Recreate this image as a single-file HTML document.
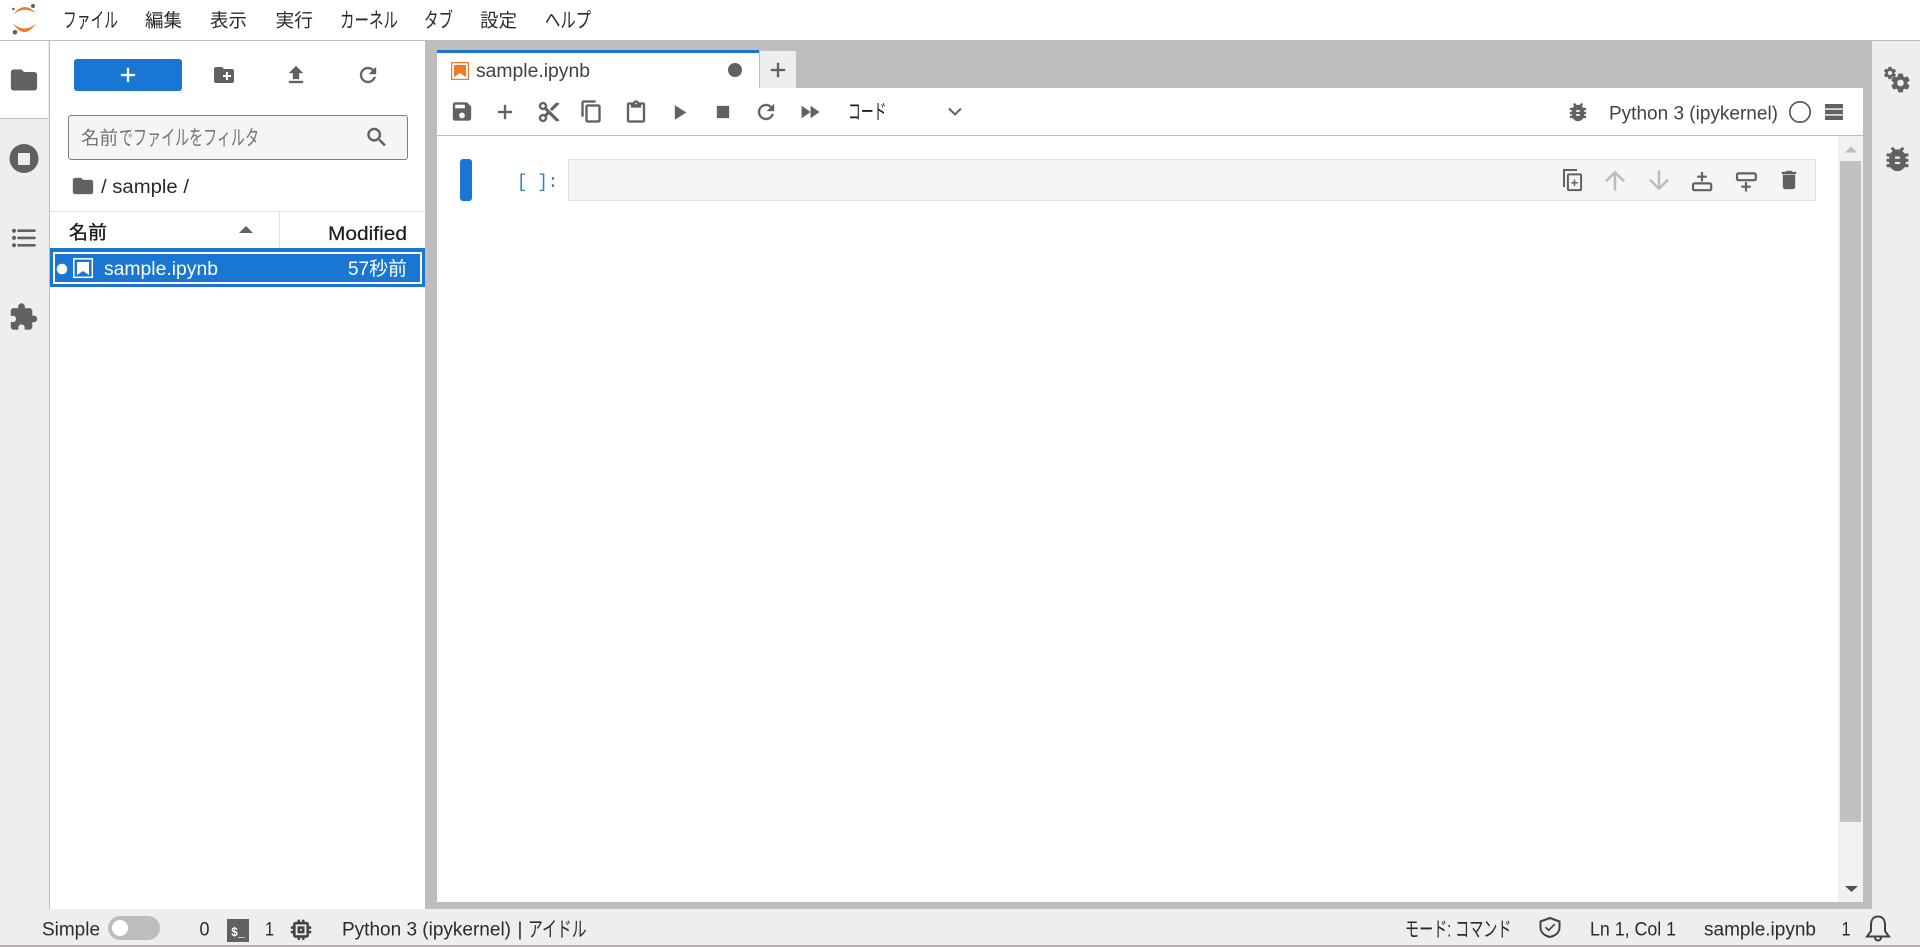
<!DOCTYPE html>
<html lang="ja"><head><meta charset="utf-8"><title>sample.ipynb - JupyterLab</title>
<style>
html,body{margin:0;padding:0;background:#fff;width:1920px;height:947px;overflow:hidden}
div{position:absolute;box-sizing:border-box}
svg{position:absolute;left:0;top:0}
text{font-family:"Liberation Sans","Noto Sans CJK JP",sans-serif;font-size:19px;fill:#2b2b2b;white-space:pre}
.ic{fill:#616161;stroke:#616161;stroke-width:.35}
.cj{font-size:18.5px}
.ka{font-size:21px}
</style></head><body>
<div style="left:0;top:0;width:1920px;height:40px;background:#fff"></div>
<div style="left:0;top:40px;width:1920px;height:1px;background:#bdbdbd"></div>
<div style="left:0;top:41px;width:50px;height:868px;background:#eee;border-right:1px solid #bdbdbd"></div>
<div style="left:0;top:41px;width:49px;height:78px;background:#fff;border-bottom:1px solid #bdbdbd;border-right:1px solid #eee"></div>
<div style="left:50px;top:41px;width:375px;height:868px;background:#fff"></div>
<div style="left:425px;top:41px;width:1447px;height:868px;background:#bdbdbd"></div>
<div style="left:1872px;top:41px;width:48px;height:868px;background:#eee"></div>
<div style="left:0;top:909px;width:1920px;height:36px;background:#eee"></div>
<div style="left:0;top:945px;width:1920px;height:2px;background:#b5afaf"></div>
<div style="left:74px;top:59px;width:108px;height:32px;background:#1976d2;border-radius:3px"></div>
<div style="left:68px;top:115px;width:340px;height:45px;background:#f5f5f5;border:1px solid #7f7f7f;border-radius:3px"></div>
<div style="left:50px;top:211px;width:375px;height:1px;background:#e0e0e0"></div>
<div style="left:279px;top:212px;width:1px;height:36px;background:#e0e0e0"></div>
<div style="left:50px;top:248px;width:375px;height:39px;background:#1976d2"></div>
<div style="left:53px;top:252px;width:369px;height:32px;border:2.5px solid #fff"></div>
<div style="left:437px;top:50px;width:322px;height:38px;background:#fff;border-top:3px solid #1976d2"></div>
<div style="left:759px;top:51px;width:37px;height:37px;background:#eee;border-left:1px solid #bdbdbd"></div>
<div style="left:437px;top:88px;width:1426px;height:47px;background:#fff"></div>
<div style="left:437px;top:135px;width:1426px;height:1px;background:#bdbdbd"></div>
<div style="left:437px;top:136px;width:1426px;height:766px;background:#fff"></div>
<div style="left:1838px;top:136px;width:25px;height:766px;background:#f1f1f1"></div>
<div style="left:1840px;top:161px;width:21px;height:661px;background:#c1c1c1"></div>
<div style="left:460px;top:159px;width:12px;height:42px;background:#1976d2;border-radius:3px"></div>
<div style="left:568px;top:159px;width:1248px;height:42px;background:#f5f5f5;border:1px solid #e0e0e0"></div>
<div style="left:108px;top:916px;width:52px;height:24px;background:#bdbdbd;border-radius:12px"></div>
<div style="left:112px;top:920px;width:16px;height:16px;background:#fff;border-radius:50%"></div>
<div style="left:227px;top:919px;width:22px;height:23px;background:#616161"></div>

<svg width="1920" height="947" viewBox="0 0 1920 947" xmlns="http://www.w3.org/2000/svg">
<!-- logo -->
<path d="M13 14.5Q24.5 0.1 36 13.5Q24.5 5.5 13 14.5Z" fill="#f37726"/>
<path d="M13 23.5Q24.5 40.5 36 23.5Q24.5 33.5 13 23.5Z" fill="#f37726"/>
<circle cx="33" cy="6" r="2" fill="#616161"/><circle cx="13.3" cy="9" r="1.3" fill="#616161"/><circle cx="15" cy="32.3" r="2.3" fill="#616161"/>
<!-- menu -->
<text class="ka" x="63" y="27.5" textLength="55" lengthAdjust="spacingAndGlyphs">ファイル</text>
<text class="cj" x="145" y="27" textLength="37" lengthAdjust="spacingAndGlyphs">編集</text>
<text class="cj" x="210" y="27" textLength="37" lengthAdjust="spacingAndGlyphs">表示</text>
<text class="cj" x="275.5" y="27" textLength="37.5" lengthAdjust="spacingAndGlyphs">実行</text>
<text class="ka" x="340" y="27.5" textLength="58" lengthAdjust="spacingAndGlyphs">カーネル</text>
<text class="ka" x="424" y="27.5" textLength="29" lengthAdjust="spacingAndGlyphs">タブ</text>
<text class="cj" x="480" y="27" textLength="37" lengthAdjust="spacingAndGlyphs">設定</text>
<text class="ka" x="545" y="27.5" textLength="46" lengthAdjust="spacingAndGlyphs">ヘルプ</text>
<!-- left sidebar icons -->
<path class="ic" transform="translate(8.5 64.5) scale(1.29)" d="M10 4H4c-1.1 0-2 .9-2 2v12c0 1.1.9 2 2 2h16c1.1 0 2-.9 2-2V8c0-1.1-.9-2-2-2h-8l-2-2z"/>
<path fill="#616161" fill-rule="evenodd" d="M24 144a14.5 14.5 0 1 0 0 29a14.5 14.5 0 1 0 0-29ZM19 153h10a1 1 0 0 1 1 1v10a1 1 0 0 1-1 1h-10a1 1 0 0 1-1-1v-10a1 1 0 0 1 1-1Z"/>
<circle fill="#616161" cx="14" cy="230.7" r="2"/><circle fill="#616161" cx="14" cy="237.9" r="2"/><circle fill="#616161" cx="14" cy="245.3" r="2"/>
<path d="M18.5 230.7H34.5M18.5 237.9H34.5M18.5 245.3H34.5" stroke="#616161" stroke-width="2.6" stroke-linecap="round" fill="none"/>
<path class="ic" transform="translate(8.5 302.2) scale(1.24)" d="M20.5 11H19V7c0-1.1-.9-2-2-2h-4V3.5C13 2.12 11.88 1 10.5 1S8 2.12 8 3.5V5H4c-1.1 0-1.99.9-1.99 2v3.8H3.5c1.49 0 2.7 1.21 2.7 2.7s-1.21 2.7-2.7 2.7H2V20c0 1.1.9 2 2 2h3.8v-1.5c0-1.49 1.21-2.7 2.7-2.7 1.49 0 2.7 1.21 2.7 2.7V22H17c1.1 0 2-.9 2-2v-4h1.5c1.38 0 2.5-1.12 2.5-2.5S21.88 11 20.5 11z"/>
<!-- file browser toolbar -->
<path fill="#fff" stroke="#fff" stroke-width=".3" transform="translate(116 63)" d="M19 13h-6v6h-2v-6H5v-2h6V5h2v6h6v2z"/>
<path fill="#616161" transform="translate(212 63)" d="M20 6h-8l-2-2H4c-1.11 0-1.99.89-1.99 2L2 18c0 1.11.89 2 2 2h16c1.11 0 2-.89 2-2V8c0-1.11-.89-2-2-2zm-1 8h-3v3h-2v-3h-3v-2h3V9h2v3h3v2z"/>
<path class="ic" transform="translate(284 63)" d="M9 16h6v-6h4l-7-7-7 7h4zm-4 2h14v2H5z"/>
<path class="ic" transform="translate(356 63)" d="M17.65 6.35C16.2 4.9 14.21 4 12 4c-4.42 0-7.99 3.58-7.99 8s3.57 8 7.99 8c3.73 0 6.84-2.55 7.73-6h-2.08c-.82 2.33-3.04 4-5.65 4-3.31 0-6-2.69-6-6s2.69-6 6-6c1.66 0 3.14.69 4.22 1.78L13 11h7V4l-2.35 2.35z"/>
<text class="cj" x="81" y="144.5" textLength="37" lengthAdjust="spacingAndGlyphs" style="fill:#757575">名前</text>
<text class="ka" x="119" y="145" textLength="140" lengthAdjust="spacingAndGlyphs" style="fill:#757575">でファイルをフィルタ</text>
<path class="ic" transform="translate(364.3 124.8) scale(1.04)" d="M15.5 14h-.79l-.28-.27C15.41 12.59 16 11.11 16 9.5 16 5.91 13.09 3 9.5 3S3 5.91 3 9.5 5.91 16 9.5 16c1.61 0 3.09-.59 4.23-1.57l.27.28v.79l5 4.99L20.49 19l-4.99-5zm-6 0C7.01 14 5 11.99 5 9.5S7.01 5 9.5 5 14 7.01 14 9.5 11.99 14 9.5 14z"/>
<path class="ic" transform="translate(71 174)" d="M10 4H4c-1.1 0-2 .9-2 2v12c0 1.1.9 2 2 2h16c1.1 0 2-.9 2-2V8c0-1.1-.9-2-2-2h-8l-2-2z"/>
<text x="101" y="193" textLength="88" lengthAdjust="spacingAndGlyphs">/ sample /</text>
<text class="cj" x="69" y="239" textLength="38" lengthAdjust="spacingAndGlyphs" style="fill:#1c1c1c" stroke="#1c1c1c" stroke-width=".35">名前</text>
<path fill="#616161" d="M239 233L246 226L253 233Z"/>
<text x="328" y="240" textLength="79" lengthAdjust="spacingAndGlyphs" style="fill:#1c1c1c" stroke="#1c1c1c" stroke-width=".2">Modified</text>
<!-- selected row -->
<circle cx="62" cy="269" r="5.3" fill="#fff"/>
<rect x="73.8" y="258.8" width="18.5" height="18.5" fill="none" stroke="#fff" stroke-width="1.5"/>
<path d="M77 262H89V275L83 271L77 275Z" fill="#fff"/>
<text x="104" y="275" textLength="114" lengthAdjust="spacingAndGlyphs" style="fill:#fff">sample.ipynb</text>
<text x="348" y="275" textLength="59" lengthAdjust="spacingAndGlyphs" style="fill:#fff">57秒前</text>
<!-- tab -->
<rect x="451.6" y="62.6" width="16.8" height="16.8" fill="#fff" stroke="#f37726" stroke-width="1.2"/>
<path d="M454 65H466V77L460 73L454 77Z" fill="#f37726"/>
<text x="476" y="77" textLength="114" lengthAdjust="spacingAndGlyphs" style="fill:#424242">sample.ipynb</text>
<circle fill="#616161" cx="735" cy="70" r="7"/>
<path class="ic" transform="translate(766 58)" d="M19 13h-6v6h-2v-6H5v-2h6V5h2v6h6v2z"/>
<!-- notebook toolbar -->
<path class="ic" transform="translate(450 99.5)" d="M17 3H5c-1.11 0-2 .9-2 2v14c0 1.1.89 2 2 2h14c1.1 0 2-.9 2-2V7l-4-4zm-5 16c-1.66 0-3-1.34-3-3s1.34-3 3-3 3 1.34 3 3-1.34 3-3 3zm3-10H5V5h10v4z"/>
<path class="ic" transform="translate(493 100)" d="M19 13h-6v6h-2v-6H5v-2h6V5h2v6h6v2z"/>
<path class="ic" transform="translate(537 100)" d="M9.64 7.64c.23-.5.36-1.05.36-1.64 0-2.21-1.79-4-4-4S2 3.79 2 6s1.79 4 4 4c.59 0 1.14-.13 1.64-.36L10 12l-2.36 2.36C7.14 14.13 6.59 14 6 14c-2.21 0-4 1.79-4 4s1.79 4 4 4 4-1.79 4-4c0-.59-.13-1.14-.36-1.64L12 14l7 7h3v-1L9.64 7.64zM6 8c-1.1 0-2-.89-2-2s.9-2 2-2 2 .89 2 2-.9 2-2 2zm0 12c-1.1 0-2-.89-2-2s.9-2 2-2 2 .89 2 2-.9 2-2 2zm6-7.5c-.28 0-.5-.22-.5-.5s.22-.5.5-.5.5.22.5.5-.22.5-.5.5zM19 3l-6 6 2 2 7-7V3z"/>
<path class="ic" transform="translate(579.5 99.5)" d="M16 1H4c-1.1 0-2 .9-2 2v14h2V3h12V1zm3 4H8c-1.1 0-2 .9-2 2v14c0 1.1.9 2 2 2h11c1.1 0 2-.9 2-2V7c0-1.1-.9-2-2-2zm0 16H8V7h11v14z"/>
<path class="ic" transform="translate(624 100.5)" d="M19 2h-4.18C14.4.84 13.3 0 12 0c-1.3 0-2.4.84-2.82 2H5c-1.1 0-2 .9-2 2v16c0 1.1.9 2 2 2h14c1.1 0 2-.9 2-2V4c0-1.1-.9-2-2-2zm-7 0c.55 0 1 .45 1 1s-.45 1-1 1-1-.45-1-1 .45-1 1-1zm7 18H5V4h2v3h10V4h2v16z"/>
<path class="ic" transform="translate(667 100.5)" d="M8 5v14l11-7z"/>
<path class="ic" transform="translate(711 100)" d="M6 6h12v12H6z"/>
<path class="ic" transform="translate(754 100)" d="M17.65 6.35C16.2 4.9 14.21 4 12 4c-4.42 0-7.99 3.58-7.99 8s3.57 8 7.99 8c3.73 0 6.84-2.55 7.73-6h-2.08c-.82 2.33-3.04 4-5.65 4-3.31 0-6-2.69-6-6s2.69-6 6-6c1.66 0 3.14.69 4.22 1.78L13 11h7V4l-2.35 2.35z"/>
<path class="ic" transform="translate(797.75 100)" d="M4 18l8.5-6L4 6v12zm9-12v12l8.5-6L13 6z"/>
<text class="ka" x="848" y="119" textLength="38.5" lengthAdjust="spacingAndGlyphs" style="fill:#1c1c1c">コード</text>
<path d="M949 108.5L955 114.5L961 108.5" fill="none" stroke="#616161" stroke-width="2"/>
<path class="ic" transform="translate(1566 100)" d="M20 8h-2.81c-.45-.78-1.07-1.45-1.82-1.96L17 4.41 15.59 3l-2.17 2.17C12.96 5.06 12.49 5 12 5c-.49 0-.96.06-1.41.17L8.41 3 7 4.41l1.62 1.63C7.88 6.55 7.26 7.22 6.81 8H4v2h2.09c-.05.33-.09.66-.09 1v1H4v2h2v1c0 .34.04.67.09 1H4v2h2.81c1.04 1.79 2.97 3 5.19 3s4.15-1.21 5.19-3H20v-2h-2.09c.05-.33.09-.66.09-1v-1h2v-2h-2v-1c0-.34-.04-.67-.09-1H20V8zm-6 8h-4v-2h4v2zm0-4h-4v-2h4v2z"/>
<text x="1609" y="119.5" textLength="169" lengthAdjust="spacingAndGlyphs" style="fill:#424242">Python 3 (ipykernel)</text>
<circle cx="1800" cy="112" r="10.2" fill="none" stroke="#616161" stroke-width="1.8"/>
<path fill="#616161" d="M1825 104h18v4.4h-18zM1825 109.8h18v4.4h-18zM1825 115.6h18v4.4h-18z"/>
<!-- cell -->
<text x="517" y="187" style="font-family:'Liberation Mono',monospace;font-size:18px;fill:#307fc1" textLength="41" lengthAdjust="spacingAndGlyphs">[ ]:</text>
<g fill="none" stroke="#616161" stroke-width="2">
<path d="M1564 187V170H1577"/>
<rect x="1567.9" y="174.4" width="13.2" height="15.7" rx="1"/>
<path d="M1574.5 179.5v6.6M1571.2 182.8h6.6" stroke-width="1.5"/>
<rect x="1693" y="183.4" width="18.2" height="6.8" rx="1.5" stroke-width="2.2"/>
<path d="M1702 172v9.5M1697.2 176.7h9.6" stroke-width="2.2"/>
<rect x="1737" y="173.4" width="18.8" height="6.8" rx="1.5" stroke-width="2.2"/>
<path d="M1746 182v9.5M1741.2 186.7h9.6" stroke-width="2.2"/>
</g>
<path fill="#bdbdbd" transform="translate(1600 165.5) scale(1.25)" d="M4 12l1.41 1.41L11 7.83V20h2V7.83l5.58 5.59L20 12l-8-8-8 8z"/>
<path fill="#bdbdbd" transform="translate(1644 165.5) scale(1.25)" d="M20 12l-1.41-1.41L13 16.17V4h-2v12.17l-5.58-5.59L4 12l8 8 8-8z"/>
<path class="ic" transform="translate(1777 168)" d="M6 19c0 1.1.9 2 2 2h8c1.1 0 2-.9 2-2V7H6v12zM19 4h-3.5l-1-1h-5l-1 1H5v2h14V4z"/>
<!-- scrollbar arrows -->
<path d="M1845 152.5L1851 146.5L1857 152.5Z" fill="#bdbdbd"/>
<path d="M1845 886H1858L1851.5 892Z" fill="#505050"/>
<!-- right sidebar -->
<path class="ic" transform="translate(1889 71.5) scale(.958)" d="M19.14 12.94c.04-.3.06-.61.06-.94 0-.32-.02-.64-.07-.94l2.03-1.58c.18-.14.23-.41.12-.61l-1.92-3.32c-.12-.22-.37-.29-.59-.22l-2.39.96c-.5-.38-1.03-.7-1.62-.94l-.36-2.54c-.04-.24-.24-.41-.48-.41h-3.84c-.24 0-.43.17-.47.41l-.36 2.54c-.59.24-1.13.57-1.62.94l-2.39-.96c-.22-.08-.47 0-.59.22L2.74 8.87c-.12.21-.08.47.12.61l2.03 1.58c-.05.3-.09.63-.09.94s.02.64.07.94l-2.03 1.58c-.18.14-.23.41-.12.61l1.92 3.32c.12.22.37.29.59.22l2.39-.96c.5.38 1.03.7 1.62.94l.36 2.54c.05.24.24.41.48.41h3.84c.24 0 .44-.17.47-.41l.36-2.54c.59-.24 1.13-.56 1.62-.94l2.39.96c.22.08.47 0 .59-.22l1.92-3.32c.12-.22.07-.47-.12-.61l-2.01-1.58zM12 15.6c-1.98 0-3.6-1.62-3.6-3.6s1.62-3.6 3.6-3.6 3.6 1.62 3.6 3.6-1.62 3.6-3.6 3.6z"/>
<path class="ic" transform="translate(1882.5 65.5) scale(.625)" d="M19.14 12.94c.04-.3.06-.61.06-.94 0-.32-.02-.64-.07-.94l2.03-1.58c.18-.14.23-.41.12-.61l-1.92-3.32c-.12-.22-.37-.29-.59-.22l-2.39.96c-.5-.38-1.03-.7-1.62-.94l-.36-2.54c-.04-.24-.24-.41-.48-.41h-3.84c-.24 0-.43.17-.47.41l-.36 2.54c-.59.24-1.13.57-1.62.94l-2.39-.96c-.22-.08-.47 0-.59.22L2.74 8.87c-.12.21-.08.47.12.61l2.03 1.58c-.05.3-.09.63-.09.94s.02.64.07.94l-2.03 1.58c-.18.14-.23.41-.12.61l1.92 3.32c.12.22.37.29.59.22l2.39-.96c.5.38 1.03.7 1.62.94l.36 2.54c.05.24.24.41.48.41h3.84c.24 0 .44-.17.47-.41l.36-2.54c.59-.24 1.13-.56 1.62-.94l2.39.96c.22.08.47 0 .59-.22l1.92-3.32c.12-.22.07-.47-.12-.61l-2.01-1.58zM12 15.6c-1.98 0-3.6-1.62-3.6-3.6s1.62-3.6 3.6-3.6 3.6 1.62 3.6 3.6-1.62 3.6-3.6 3.6z"/>
<path class="ic" transform="translate(1881.5 143) scale(1.333)" d="M20 8h-2.81c-.45-.78-1.07-1.45-1.82-1.96L17 4.41 15.59 3l-2.17 2.17C12.96 5.06 12.49 5 12 5c-.49 0-.96.06-1.41.17L8.41 3 7 4.41l1.62 1.63C7.88 6.55 7.26 7.22 6.81 8H4v2h2.09c-.05.33-.09.66-.09 1v1H4v2h2v1c0 .34.04.67.09 1H4v2h2.81c1.04 1.79 2.97 3 5.19 3s4.15-1.21 5.19-3H20v-2h-2.09c.05-.33.09-.66.09-1v-1h2v-2h-2v-1c0-.34-.04-.67-.09-1H20V8zm-6 8h-4v-2h4v2zm0-4h-4v-2h4v2z"/>
<!-- status bar -->
<text x="42" y="935.5" textLength="58" lengthAdjust="spacingAndGlyphs">Simple</text>
<text x="199.5" y="935.5" textLength="10" lengthAdjust="spacingAndGlyphs">0</text>
<text x="231" y="936" style="font-family:'Liberation Mono',monospace;font-size:13px;font-weight:bold;fill:#fff" textLength="14" lengthAdjust="spacingAndGlyphs">$_</text>
<text x="265" y="935.5" textLength="9" lengthAdjust="spacingAndGlyphs">1</text>
<path transform="translate(287.7 916.5) scale(1.11)" fill="#424242" stroke="#424242" stroke-width=".3" d="M15 9H9v6h6V9zm-2 4h-2v-2h2v2zm8-2V9h-2V7c0-1.1-.9-2-2-2h-2V3h-2v2h-2V3H9v2H7c-1.1 0-2 .9-2 2v2H3v2h2v2H3v2h2v2c0 1.1.9 2 2 2h2v2h2v-2h2v2h2v-2h2c1.1 0 2-.9 2-2v-2h2v-2h-2v-2h2zm-4 6H7V7h10v10z"/>
<text x="342" y="935.5" textLength="169" lengthAdjust="spacingAndGlyphs">Python 3 (ipykernel)</text>
<text x="517.5" y="935.5">|</text>
<text class="ka" x="528" y="936.5" textLength="58.5" lengthAdjust="spacingAndGlyphs">アイドル</text>
<text class="ka" x="1405" y="936.5" textLength="106.5" lengthAdjust="spacingAndGlyphs">モード: コマンド</text>
<path d="M1550 918L1559.5 921.5V927.5C1559.5 932 1556 935.5 1550 937C1544 935.5 1540.5 932 1540.5 927.5V921.5Z" fill="none" stroke="#424242" stroke-width="2"/>
<path d="M1545.5 927.2L1548.7 930.2L1554.7 924.2" fill="none" stroke="#424242" stroke-width="1.6"/>
<text x="1590" y="935.5" textLength="86" lengthAdjust="spacingAndGlyphs">Ln 1, Col 1</text>
<text x="1704" y="935.5" textLength="112" lengthAdjust="spacingAndGlyphs">sample.ipynb</text>
<text x="1841.5" y="935.5" textLength="9" lengthAdjust="spacingAndGlyphs">1</text>
<path d="M1878 916.5C1872.5 916.5 1871 921 1871 925V931L1867 936.5H1889L1885 931V925C1885 921 1883.5 916.5 1878 916.5Z" fill="none" stroke="#424242" stroke-width="2"/>
<path d="M1875 937.5a3 3 0 0 0 6 0" fill="none" stroke="#424242" stroke-width="2"/>
</svg>
</body></html>
